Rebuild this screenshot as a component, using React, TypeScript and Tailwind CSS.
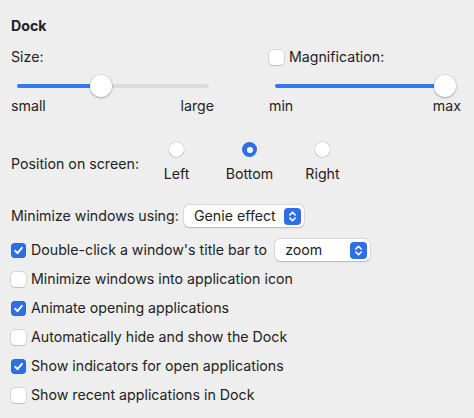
import React from 'react'

const font = { fontFamily: 'Inter, "Liberation Sans", Arial, sans-serif' }

function Check({ checked }: { checked: boolean }) {
  if (checked) {
    return (
      <span className="flex h-[15px] w-[15px] shrink-0 items-center justify-center rounded-[4px] bg-[#2f6fe6] shadow-[inset_0_0_0_0.5px_rgba(0,0,0,0.15)]">
        <svg width="11" height="11" viewBox="0 0 11 11" fill="none">
          <path d="M2.2 5.8 L4.5 8.2 L8.9 2.8" stroke="white" strokeWidth="1.9" strokeLinecap="round" strokeLinejoin="round" />
        </svg>
      </span>
    )
  }
  return (
    <span className="block h-[15px] w-[15px] shrink-0 rounded-[4px] bg-white shadow-[0_0_0_0.5px_rgba(0,0,0,0.18),0_0.5px_1px_rgba(0,0,0,0.12)]" />
  )
}

function Radio({ selected }: { selected: boolean }) {
  if (selected) {
    return (
      <span className="flex h-[15px] w-[15px] items-center justify-center rounded-full bg-[#2f6fe6]">
        <span className="block h-[6px] w-[6px] rounded-full bg-white" />
      </span>
    )
  }
  return <span className="block h-[15px] w-[15px] rounded-full bg-white shadow-[0_0_0_0.5px_rgba(0,0,0,0.18),0_0.5px_1px_rgba(0,0,0,0.12)]" />
}

function Slider({ value, width }: { value: number; width: number }) {
  const knob = 22
  const left = value * (width - knob)
  return (
    <div className="relative h-[22px]" style={{ width }}>
      <div className="absolute left-0 right-0 top-[9px] h-[4px] rounded-full bg-[#dcdcdc]" />
      <div className="absolute left-0 top-[9px] h-[4px] rounded-full bg-[#3478f6]" style={{ width: left + knob / 2 }} />
      <div
        className="absolute top-0 h-[22px] w-[22px] rounded-full bg-white shadow-[0_0_0_0.5px_rgba(0,0,0,0.12),0_1px_2.5px_rgba(0,0,0,0.25)]"
        style={{ left }}
      />
    </div>
  )
}

function Stepper() {
  return (
    <span className="flex h-[17px] w-[17px] items-center justify-center rounded-[4px] bg-[#2f6fe6]">
      <svg width="17" height="17" viewBox="0 0 17 17" fill="none">
        <path d="M5.8 7 L8.5 4.3 L11.2 7" stroke="white" strokeWidth="1.6" strokeLinecap="round" strokeLinejoin="round" />
        <path d="M5.8 10 L8.5 12.7 L11.2 10" stroke="white" strokeWidth="1.6" strokeLinecap="round" strokeLinejoin="round" />
      </svg>
    </span>
  )
}

function Popup({ label, width }: { label: string; width: number }) {
  return (
    <div
      className="flex h-[22px] items-center justify-between rounded-[5px] bg-white pl-[10px] pr-[3px] shadow-[0_0_0_0.5px_rgba(0,0,0,0.12),0_0.5px_1.5px_rgba(0,0,0,0.18)]"
      style={{ width }}
    >
      <span>{label}</span>
      <Stepper />
    </div>
  )
}

function CheckRow({ checked, label }: { checked: boolean; label: string }) {
  return (
    <div className="mt-[7px] flex h-[22px] items-center gap-[5px]">
      <Check checked={checked} />
      <span>{label}</span>
    </div>
  )
}

export default function App() {
  return (
    <div
      className="h-[418px] w-[474px] overflow-hidden whitespace-nowrap bg-[#eeeeee] pl-[11px] pt-[17px] text-[14.2px] leading-[18px] text-[#232323]"
      style={font}
    >
      <div className="font-bold">Dock</div>

      <div className="mt-[13px] flex">
        <div className="w-[203px]">
          <div>Size:</div>
          <div className="mt-[9px] pl-[6px]">
            <Slider value={0.43} width={192} />
          </div>
          <div className="flex justify-between">
            <span>small</span>
            <span>large</span>
          </div>
        </div>
        <div className="ml-[55px] w-[192px]">
          <div className="flex items-center gap-[5px]">
            <Check checked={false} />
            <span>Magnification:</span>
          </div>
          <div className="mt-[9px] pl-[6px]">
            <Slider value={1} width={181} />
          </div>
          <div className="flex justify-between">
            <span>min</span>
            <span>max</span>
          </div>
        </div>
      </div>

      <div className="mt-[27px] flex items-center">
        <div className="w-[129px] pt-[3px]">Position on screen:</div>
        {['Left', 'Bottom', 'Right'].map((p) => (
          <div key={p} className="flex w-[73px] flex-col items-center">
            <Radio selected={p === 'Bottom'} />
            <span className="mt-[8px]">{p}</span>
          </div>
        ))}
      </div>

      <div className="mt-[22px] flex items-center">
        <div className="w-[173px]">Minimize windows using:</div>
        <Popup label="Genie effect" width={120} />
      </div>

      <div className="mt-[12px] flex h-[22px] items-center">
        <Check checked={true} />
        <span className="ml-[5px]">Double-click a window's title bar to</span>
        <div className="ml-[8px]">
          <Popup label="zoom" width={95} />
        </div>
      </div>
      <CheckRow checked={false} label="Minimize windows into application icon" />
      <CheckRow checked={true} label="Animate opening applications" />
      <CheckRow checked={false} label="Automatically hide and show the Dock" />
      <CheckRow checked={true} label="Show indicators for open applications" />
      <CheckRow checked={false} label="Show recent applications in Dock" />
    </div>
  )
}
